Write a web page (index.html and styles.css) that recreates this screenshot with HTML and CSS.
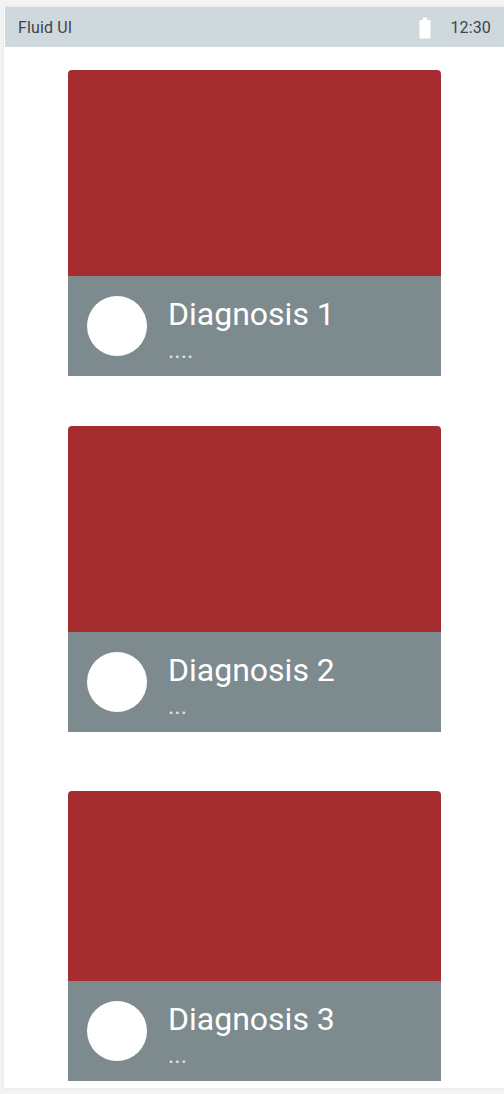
FILE: index.html
```html
<!DOCTYPE html>
<html lang="en">
<head>
<meta charset="utf-8">
<title>Fluid UI</title>
<link rel="stylesheet" href="styles.css">
</head>
<body>
<div class="screen">
  <header class="status">
    <span class="brand">Fluid UI</span>
    <svg class="battery" viewBox="0 0 12 22" width="12" height="22" aria-hidden="true"><path d="M4 0.500h4v2.500h2.500a1 1 0 0 1 1 1V20a1.500 1.500 0 0 1-1.500 1.500H2A1.500 1.500 0 0 1 .5 20V4a1 1 0 0 1 1-1H4z" fill="#fff"/></svg>
    <span class="time">12:30</span>
  </header>
  <main class="list">
    <article class="card">
      <div class="photo"></div>
      <div class="info">
        <div class="avatar"></div>
        <div class="text"><h2 class="title">Diagnosis 1</h2><p class="sub">....</p></div>
      </div>
    </article>
    <article class="card">
      <div class="photo"></div>
      <div class="info">
        <div class="avatar"></div>
        <div class="text"><h2 class="title">Diagnosis 2</h2><p class="sub">...</p></div>
      </div>
    </article>
    <article class="card card-last">
      <div class="photo photo-short"></div>
      <div class="info">
        <div class="avatar"></div>
        <div class="text"><h2 class="title">Diagnosis 3</h2><p class="sub">...</p></div>
      </div>
    </article>
  </main>
</div>
</body>
</html>
```
FILE: styles.css
```css
* { box-sizing: border-box; }
html, body { margin: 0; height: 100%; }
body {
  background: #f3f3f3;
  padding: 7px 0 6px 4px;
  font-family: Roboto, "Liberation Sans", sans-serif;
  overflow: hidden;
}
.screen {
  height: 1081px;
  background: #fff;
  box-shadow: 0 0 3px rgba(0, 0, 0, .08);
}
.status {
  height: 40px;
  background: #cfd8dc;
  border-left: 1px solid #fff;
  display: flex;
  align-items: center;
  padding: 0 13px 0 13px;
  font-size: 16px;
  letter-spacing: .15px;
  color: #3d4548;
}
.brand { flex: 1; }
.battery { margin: 2px 19px 0 0; }
.list {
  padding: 23px 0 0 64px;
}
.card {
  width: 373px;
  margin-bottom: 50px;
}
.card:nth-child(2) { margin-bottom: 59px; }
.card-last { margin-bottom: 0; }
.photo {
  height: 206px;
  background: #a52c2f;
  border-radius: 4px 4px 0 0;
}
.photo-short { height: 190px; }
.info {
  height: 100px;
  background: #7d8a8e;
  display: flex;
  padding: 20px 0 0 19px;
  color: #fff;
}
.avatar {
  width: 60px;
  height: 60px;
  border-radius: 50%;
  background: #fff;
  flex: none;
}
.text { margin-left: 21px; }
.title {
  margin: 0;
  font-size: 32px;
  font-weight: 400;
  line-height: 36px;
}
.sub {
  margin: 4px 0 0;
  font-size: 24px;
  line-height: 28px;
  color: #dfe3e4;
}
```
